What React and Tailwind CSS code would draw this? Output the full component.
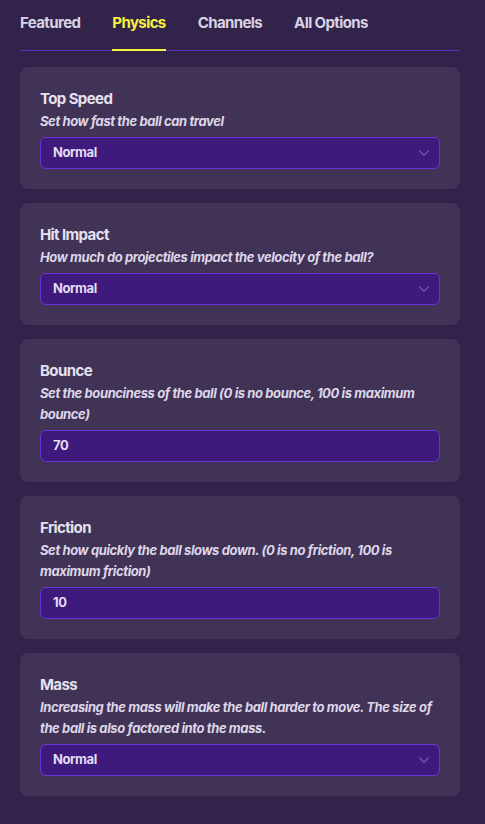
const tabs = ['Featured', 'Physics', 'Channels', 'All Options'];

const options = [
  { title: 'Top Speed', desc: 'Set how fast the ball can travel', kind: 'select', value: 'Normal' },
  { title: 'Hit Impact', desc: 'How much do projectiles impact the velocity of the ball?', kind: 'select', value: 'Normal' },
  { title: 'Bounce', desc: 'Set the bounciness of the ball (0 is no bounce, 100 is maximum bounce)', kind: 'input', value: '70' },
  { title: 'Friction', desc: 'Set how quickly the ball slows down. (0 is no friction, 100 is maximum friction)', kind: 'input', value: '10' },
  {
    title: 'Mass',
    desc: 'Increasing the mass will make the ball harder to move. The size of the ball is also factored into the mass.',
    kind: 'select',
    value: 'Normal',
  },
];

function Chevron() {
  return (
    <svg width="10" height="6" viewBox="0 0 10 6" fill="none" stroke="#7b5cb8" strokeWidth="1.2">
      <polyline points="0.5,0.5 5,5.3 9.5,0.5" />
    </svg>
  );
}

function OptionCard({ option }) {
  return (
    <div className="rounded-lg bg-[#413356] p-5">
      <p className="text-[15px] leading-6 font-bold tracking-[-0.04em] text-[#e6e1ef]">{option.title}</p>
      <p className="text-[13px] leading-[21px] font-bold italic tracking-[-0.03em] text-[#ddd6e8]">{option.desc}</p>
      <div className="mt-[5px] flex h-8 items-center justify-between rounded-md border border-[#6a34d6] bg-[#3d1a7c] pr-[10px] pl-3">
        <span className="text-[13px] font-bold tracking-[-0.03em] text-[#e4dcf2]">{option.value}</span>
        {option.kind === 'select' && <Chevron />}
      </div>
    </div>
  );
}

export default function App() {
  return (
    <div className="min-h-[824px] bg-[#32234b] pr-[25px] pb-7 pl-5 font-['Inter',sans-serif]">
      <div className="flex gap-8 border-b border-[#5b2fc9]">
        {tabs.map((tab) => (
          <div
            key={tab}
            className={
              tab === 'Physics'
                ? 'relative pt-[11px] pb-[15px] text-[15px] leading-6 font-bold tracking-[-0.04em] text-[#f7f23e]'
                : 'relative pt-[11px] pb-[15px] text-[15px] leading-6 font-bold tracking-[-0.04em] text-[#d9d3e4]'
            }
          >
            {tab}
            {tab === 'Physics' && <span className="absolute right-0 -bottom-px left-0 h-0.5 bg-[#f7f23e]" />}
          </div>
        ))}
      </div>

      <div className="mt-4 flex flex-col gap-[14px]">
        {options.map((option) => (
          <OptionCard key={option.title} option={option} />
        ))}
      </div>
    </div>
  );
}
